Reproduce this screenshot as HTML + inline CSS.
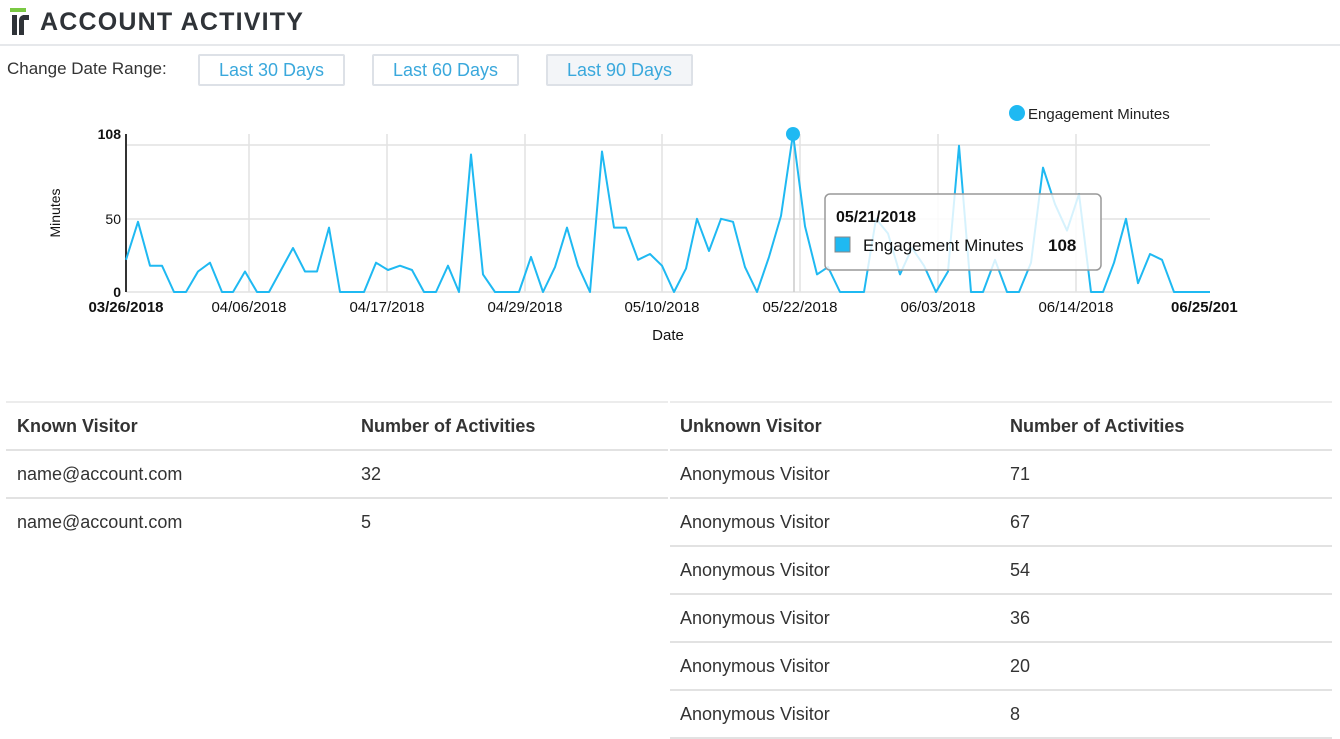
<!DOCTYPE html>
<html><head><meta charset="utf-8"><style>
*{margin:0;padding:0;box-sizing:border-box}
body{width:1340px;height:738px;background:#fff;font-family:"Liberation Sans",Arial,sans-serif;color:#333;position:relative;overflow:hidden}
.abs{position:absolute}
.title{left:40px;top:8px;font-size:25px;font-weight:bold;letter-spacing:1.2px;color:#2f3338}
.sep{left:0;top:44px;width:1340px;height:2px;background:#e6e8eb}
.lbl{left:7px;top:59px;font-size:17px;color:#333}
.btn{top:54px;width:147px;height:32px;border:2px solid #dde1e7;border-radius:2px;color:#3aa8dc;font-size:18px;text-align:center;line-height:28px;background:#fff}
.tbl{top:401px;border-top:2px solid #ececec}
.row{height:48px;border-bottom:2px solid #e2e2e2;font-size:18px;line-height:46px;position:relative}
.row span{position:absolute;top:0}
.hd{font-weight:bold}
</style></head><body>
<div class="abs" style="left:10px;top:8px;width:16px;height:4px;background:#7ac943"></div>
<div class="abs" style="left:12px;top:15px;width:5px;height:20px;background:#2f3338"></div>
<div class="abs" style="left:19px;top:15px;width:5px;height:20px;background:#2f3338;border-top-left-radius:5px"></div>
<div class="abs" style="left:23px;top:15px;width:6px;height:5px;background:#2f3338"></div>
<div class="abs title">ACCOUNT ACTIVITY</div>
<div class="abs sep"></div>
<div class="abs lbl">Change Date Range:</div>
<div class="abs btn" style="left:198px">Last 30 Days</div>
<div class="abs btn" style="left:372px">Last 60 Days</div>
<div class="abs btn" style="left:546px;background:#f3f5f8">Last 90 Days</div>

<svg class="abs" style="left:0;top:0" width="1340" height="380" font-family="Liberation Sans,Arial,sans-serif">
<circle cx="1017" cy="113" r="8" fill="#1fb9f2"/>
<text x="1028" y="119" font-size="15" fill="#222">Engagement Minutes</text>
<g stroke="#e2e2e2" stroke-width="1.5">
<line x1="126" y1="145" x2="1210" y2="145"/><line x1="126" y1="219" x2="1210" y2="219"/><line x1="126" y1="292" x2="1210" y2="292"/>
<line x1="249" y1="134" x2="249" y2="292"/><line x1="387" y1="134" x2="387" y2="292"/><line x1="525" y1="134" x2="525" y2="292"/><line x1="662" y1="134" x2="662" y2="292"/><line x1="800" y1="134" x2="800" y2="292"/><line x1="938" y1="134" x2="938" y2="292"/><line x1="1076" y1="134" x2="1076" y2="292"/>
<line x1="794" y1="134" x2="794" y2="292" stroke="#ccc"/>
</g>
<line x1="126" y1="134" x2="126" y2="292" stroke="#333" stroke-width="2"/>
<g font-size="14" fill="#111" text-anchor="end">
<text x="121" y="139" font-weight="bold">108</text><text x="121" y="224">50</text><text x="121" y="297" font-weight="bold">0</text></g>
<text x="60" y="213" font-size="14" fill="#111" text-anchor="middle" transform="rotate(-90 60 213)">Minutes</text>
<g font-size="15" fill="#111" text-anchor="middle">
<text x="126" y="312" font-weight="bold">03/26/2018</text><text x="249" y="312">04/06/2018</text><text x="387" y="312">04/17/2018</text><text x="525" y="312">04/29/2018</text><text x="662" y="312">05/10/2018</text><text x="800" y="312">05/22/2018</text><text x="938" y="312">06/03/2018</text><text x="1076" y="312">06/14/2018</text>
<text x="1171" y="312" text-anchor="start" font-weight="bold">06/25/201</text>
<text x="668" y="340">Date</text></g>
<polyline fill="none" stroke="#1fb9f2" stroke-width="2" stroke-linejoin="round" points="126,259.8 138,221.8 150,265.7 162,265.7 174,292 186,292 198,271.5 210,262.7 222,292 233,292 245,271.5 257,292 269,292 281,270 293,248 305,271.5 317,271.5 329,227.6 340,292 352,292 364,292 376,262.7 388,270 400,265.7 412,270 424,292 436,292 448,265.7 459,292 471,154.5 483,274.4 495,292 507,292 519,292 531,256.9 543,292 555,267.1 567,227.6 578,265.7 590,292 602,151.5 614,227.6 626,227.6 638,259.8 650,254 662,265.7 674,292 686,268.6 697,218.8 709,251 721,218.8 733,221.8 745,267.1 757,292 769,256.9 781,215.9 793,134 805,226.2 817,274.4 828,267.1 840,292 852,292 864,292 876,218.8 888,233.5 900,274.4 912,248 924,265.7 936,292 948,271.5 959,145.7 971,292 983,292 995,259.8 1007,292 1019,292 1031,262.7 1043,167.6 1055,204.2 1067,230.6 1079,194 1091,292 1103,292 1114,262.7 1126,218.8 1138,283.2 1150,254 1162,259.8 1174,292 1186,292 1198,292 1210,292"/>
<circle cx="793" cy="134" r="7" fill="#1fb9f2"/>
<rect x="825" y="194" width="276" height="76" rx="5" fill="rgba(255,255,255,0.82)" stroke="#999" stroke-width="1.5"/>
<text x="836" y="222" font-size="16" font-weight="bold" fill="#111">05/21/2018</text>
<rect x="835" y="237" width="15" height="15" fill="#1fb9f2" stroke="#888" stroke-width="1"/>
<text x="863" y="251" font-size="17" fill="#111">Engagement Minutes</text>
<text x="1048" y="251" font-size="17" font-weight="bold" fill="#111">108</text>
</svg>

<div class="abs tbl" style="left:6px;width:662px">
<div class="row hd"><span style="left:11px">Known Visitor</span><span style="left:355px">Number of Activities</span></div>
<div class="row"><span style="left:11px">name@account.com</span><span style="left:355px">32</span></div>
<div class="row" style="border-bottom:none"><span style="left:11px">name@account.com</span><span style="left:355px">5</span></div>
</div>
<div class="abs tbl" style="left:670px;width:662px">
<div class="row hd"><span style="left:10px">Unknown Visitor</span><span style="left:340px">Number of Activities</span></div>
<div class="row"><span style="left:10px">Anonymous Visitor</span><span style="left:340px">71</span></div>
<div class="row"><span style="left:10px">Anonymous Visitor</span><span style="left:340px">67</span></div>
<div class="row"><span style="left:10px">Anonymous Visitor</span><span style="left:340px">54</span></div>
<div class="row"><span style="left:10px">Anonymous Visitor</span><span style="left:340px">36</span></div>
<div class="row"><span style="left:10px">Anonymous Visitor</span><span style="left:340px">20</span></div>
<div class="row"><span style="left:10px">Anonymous Visitor</span><span style="left:340px">8</span></div>
</div>
</body></html>
